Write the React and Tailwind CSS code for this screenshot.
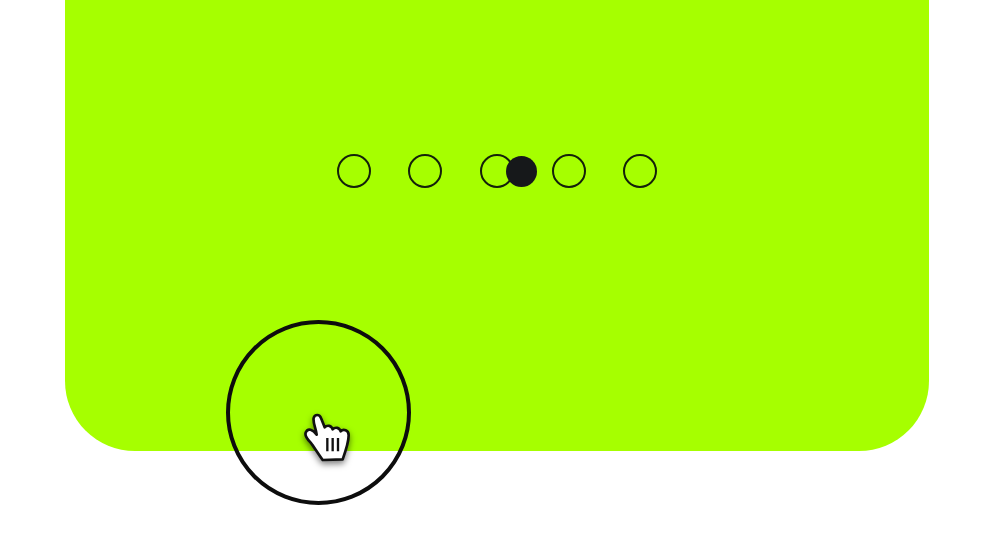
import React from "react";

const dots = [0, 1, 2, 3, 4];

function HandCursor() {
  return (
    <svg
      viewBox="0 0 270 240"
      className="absolute left-[280px] top-[390px] w-[90px] h-[80px] drop-shadow-[0_3px_3px_rgba(0,0,0,0.5)]"
    >
      <path
        d="M101 84 C104 72 119 72 123 84 L134 112 C142 104 154 106 158 118 C166 110 178 112 182 124 C190 116 206 120 206 136 C206 158 198 180 188 208 L128 210 C116 194 100 168 92 158 C82 148 72 136 78 126 C84 114 98 118 110 134 C108 116 98 98 101 84 Z"
        fill="#fff"
        stroke="#111"
        strokeWidth="8"
        strokeLinejoin="round"
      />
      <path
        d="M142 144 V184 M158 144 V184 M174 144 V184"
        stroke="#111"
        strokeWidth="7"
        fill="none"
      />
    </svg>
  );
}

export default function App() {
  return (
    <div className="relative h-[557px] w-[1000px] overflow-hidden bg-white">
      <div className="ml-[65px] w-[864px] h-[451px] rounded-b-[70px] bg-[#a6ff00] pt-[154px]">
        <div className="relative flex justify-center gap-[37.67px]">
          {dots.map((dot) => (
            <span
              key={dot}
              className="w-[34px] h-[34px] rounded-full border-[2.5px] border-[#14210a]"
            />
          ))}
          {/* active dot sits over the row */}
          <span className="absolute left-[441px] top-[1.5px] w-[31px] h-[31px] rounded-full bg-[#16181a]" />
        </div>
      </div>
      <div className="absolute left-[226px] top-[320px] w-[185px] h-[185px] rounded-full border-4 border-[#0d0d0d]" />
      <HandCursor />
    </div>
  );
}
